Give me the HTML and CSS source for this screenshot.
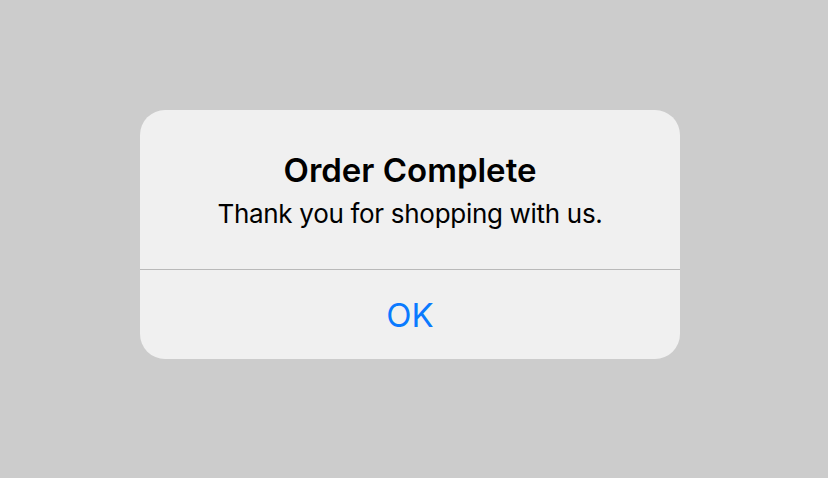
FILE: index.html
```html
<!DOCTYPE html>
<html>
<head>
<meta charset="utf-8">
<link rel="stylesheet" href="styles.css">
</head>
<body>
<div class="screen">
  <div class="alert">
    <div class="alert-body">
      <div class="alert-title">Order Complete</div>
      <div class="alert-message">Thank you for shopping with us.</div>
    </div>
    <div class="alert-actions">
      <button class="alert-button">OK</button>
    </div>
  </div>
</div>
</body>
</html>
```
FILE: styles.css
```css
html, body {
  margin: 0;
  padding: 0;
  width: 828px;
  height: 478px;
  background: #cccccc;
  font-family: Inter, "Noto Sans", sans-serif;
}
.screen {
  width: 828px;
  height: 478px;
  display: flex;
  padding-top: 110px;
  padding-left: 140px;
  box-sizing: border-box;
}
.alert {
  width: 540px;
  height: 249px;
  background: #f0f0f0;
  border-radius: 25px;
  display: flex;
  flex-direction: column;
  overflow: hidden;
}
.alert-body {
  height: 160px;
  box-sizing: border-box;
  border-bottom: 1px solid #b9b9b9;
  display: flex;
  flex-direction: column;
  align-items: center;
  padding-top: 40px;
  color: #000;
}
.alert-title {
  font-size: 33px;
  font-weight: 600;
  line-height: 40px;
  letter-spacing: 0;
}
.alert-message {
  font-size: 26px;
  line-height: 32px;
  margin-top: 8px;
  letter-spacing: -0.3px;
}
.alert-actions {
  flex: 1;
  display: flex;
}
.alert-button {
  flex: 1;
  border: none;
  background: transparent;
  font-family: inherit;
  font-size: 33px;
  line-height: 40px;
  color: #0a7aff;
  padding: 0;
}
```
